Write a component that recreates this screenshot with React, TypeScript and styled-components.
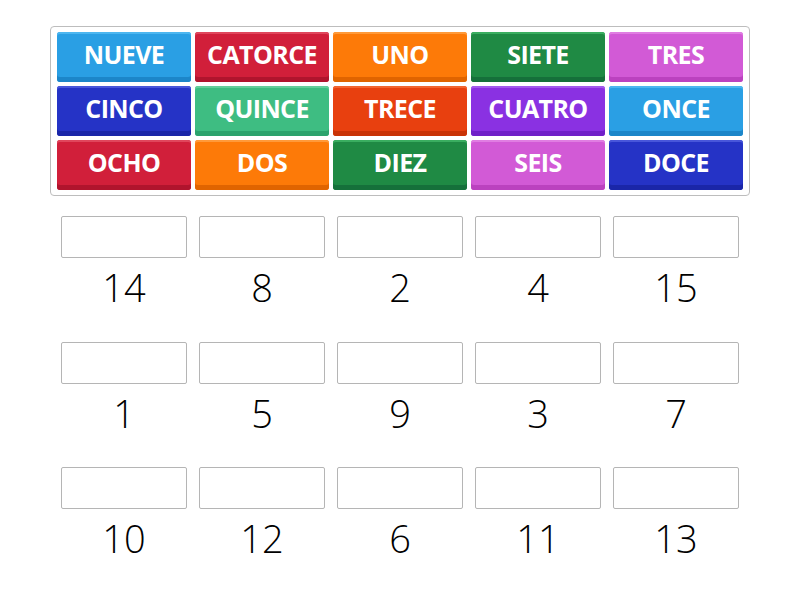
import React from 'react';
import styled, { createGlobalStyle } from 'styled-components';

const GlobalStyle = createGlobalStyle`
  html, body {
    margin: 0;
    padding: 0;
    background: #ffffff;
    font-family: "Open Sans", "Liberation Sans", sans-serif;
  }
`;

type Tone = 'sky' | 'red' | 'orange' | 'green' | 'pink' | 'blue' | 'teal' | 'flame' | 'purple';

const palette: Record<Tone, { top: string; body: string; bottom: string }> = {
  sky: { top: '#4cb6f0', body: '#2a9fe4', bottom: '#1c86c9' },
  red: { top: '#e0465c', body: '#d11f3a', bottom: '#b0142d' },
  orange: { top: '#ff9a3a', body: '#fd7a08', bottom: '#e06400' },
  green: { top: '#3aae60', body: '#1f8a44', bottom: '#15703a' },
  pink: { top: '#e07de2', body: '#d25ad6', bottom: '#bb42bf' },
  blue: { top: '#4856da', body: '#2533c6', bottom: '#1a26a8' },
  teal: { top: '#62cf9b', body: '#3ebd82', bottom: '#2ca36c' },
  flame: { top: '#f2642f', body: '#e8400f', bottom: '#c93306' },
  purple: { top: '#a359ec', body: '#8a31e2', bottom: '#7020c8' },
};

const tiles: { label: string; tone: Tone }[] = [
  { label: 'NUEVE', tone: 'sky' },
  { label: 'CATORCE', tone: 'red' },
  { label: 'UNO', tone: 'orange' },
  { label: 'SIETE', tone: 'green' },
  { label: 'TRES', tone: 'pink' },
  { label: 'CINCO', tone: 'blue' },
  { label: 'QUINCE', tone: 'teal' },
  { label: 'TRECE', tone: 'flame' },
  { label: 'CUATRO', tone: 'purple' },
  { label: 'ONCE', tone: 'sky' },
  { label: 'OCHO', tone: 'red' },
  { label: 'DOS', tone: 'orange' },
  { label: 'DIEZ', tone: 'green' },
  { label: 'SEIS', tone: 'pink' },
  { label: 'DOCE', tone: 'blue' },
];

const numbers = ['14', '8', '2', '4', '15', '1', '5', '9', '3', '7', '10', '12', '6', '11', '13'];

const Page = styled.div`
  width: 800px;
  height: 600px;
  padding: 26px 0 0 50px;
  box-sizing: border-box;
`;

const Bank = styled.div`
  width: 700px;
  box-sizing: border-box;
  border: 1px solid #bdbdbd;
  border-radius: 4px;
  padding: 5px 6px 5px 6px;
  display: grid;
  grid-template-columns: repeat(5, 134px);
  grid-auto-rows: 50px;
  column-gap: 4px;
  row-gap: 4px;
`;

const Tile = styled.div<{ $tone: Tone }>`
  display: flex;
  align-items: center;
  justify-content: center;
  border-radius: 3px;
  color: #ffffff;
  font-weight: 700;
  font-size: 25px;
  letter-spacing: -0.6px;
  padding-bottom: 6px;
  box-sizing: border-box;
  background: ${p => palette[p.$tone].body};
  box-shadow: inset 0 2px 0 ${p => palette[p.$tone].top},
    inset 0 -5px 0 ${p => palette[p.$tone].bottom};
`;

const Targets = styled.div`
  display: grid;
  grid-template-columns: repeat(5, 134px);
  column-gap: 4px;
  grid-auto-rows: 125.5px;
  padding: 20px 0 0 7px;
`;

const Slot = styled.div`
  display: flex;
  flex-direction: column;
  align-items: center;
`;

const DropBox = styled.div`
  width: 126px;
  height: 42px;
  box-sizing: border-box;
  border: 1px solid #b5b5b5;
  border-radius: 2px;
  background: #ffffff;
`;

const Number = styled.div`
  margin-top: 4px;
  font-size: 38px;
  font-weight: 300;
  line-height: 50px;
  color: #000000;
`;

export default function App() {
  return (
    <>
      <GlobalStyle />
      <Page>
        <Bank>
          {tiles.map(t => (
            <Tile key={t.label} $tone={t.tone}>
              {t.label}
            </Tile>
          ))}
        </Bank>
        <Targets>
          {numbers.map(n => (
            <Slot key={n}>
              <DropBox />
              <Number>{n}</Number>
            </Slot>
          ))}
        </Targets>
      </Page>
    </>
  );
}
